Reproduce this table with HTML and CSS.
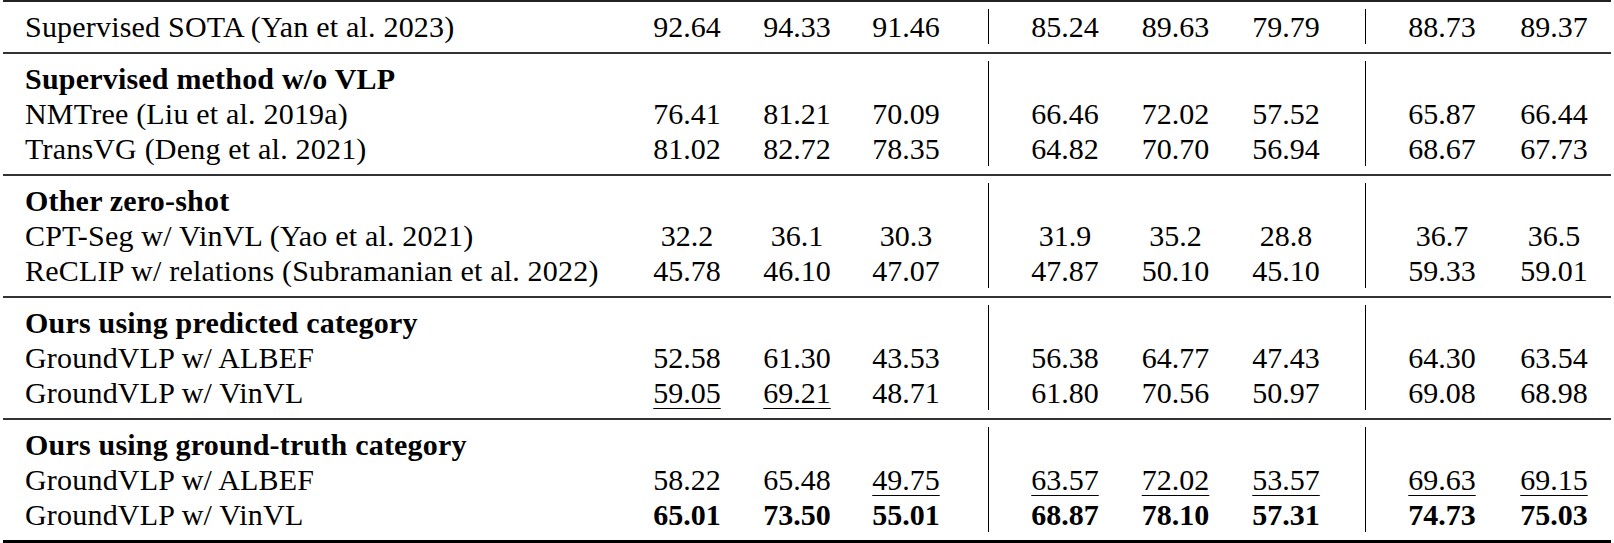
FILE: index.html
```html
<!DOCTYPE html>
<html lang="en">
<head>
    <meta charset="UTF-8">
    <title>Results table</title>
    <link rel="stylesheet" href="styles.css">
</head>
<body>
    <div class="results">
        <div class="block top">
            <div class="row">
                <div class="label">Supervised SOTA (Yan et al. 2023)</div>
                <div>92.64</div><div>94.33</div><div>91.46</div>
                <div class="sep a"></div>
                <div>85.24</div><div>89.63</div><div>79.79</div>
                <div class="sep b"></div>
                <div>88.73</div><div>89.37</div>
            </div>
        </div>

        <div class="block">
            <div class="row">
                <div class="label head">Supervised method w/o VLP</div>
                <div class="sep a"></div>
                <div class="sep b"></div>
            </div>
            <div class="row">
                <div class="label">NMTree (Liu et al. 2019a)</div>
                <div>76.41</div><div>81.21</div><div>70.09</div>
                <div class="sep a"></div>
                <div>66.46</div><div>72.02</div><div>57.52</div>
                <div class="sep b"></div>
                <div>65.87</div><div>66.44</div>
            </div>
            <div class="row">
                <div class="label">TransVG (Deng et al. 2021)</div>
                <div>81.02</div><div>82.72</div><div>78.35</div>
                <div class="sep a"></div>
                <div>64.82</div><div>70.70</div><div>56.94</div>
                <div class="sep b"></div>
                <div>68.67</div><div>67.73</div>
            </div>
        </div>

        <div class="block">
            <div class="row">
                <div class="label head">Other zero-shot</div>
                <div class="sep a"></div>
                <div class="sep b"></div>
            </div>
            <div class="row">
                <div class="label">CPT-Seg w/ VinVL (Yao et al. 2021)</div>
                <div>32.2</div><div>36.1</div><div>30.3</div>
                <div class="sep a"></div>
                <div>31.9</div><div>35.2</div><div>28.8</div>
                <div class="sep b"></div>
                <div>36.7</div><div>36.5</div>
            </div>
            <div class="row">
                <div class="label">ReCLIP w/ relations (Subramanian et al. 2022)</div>
                <div>45.78</div><div>46.10</div><div>47.07</div>
                <div class="sep a"></div>
                <div>47.87</div><div>50.10</div><div>45.10</div>
                <div class="sep b"></div>
                <div>59.33</div><div>59.01</div>
            </div>
        </div>

        <div class="block">
            <div class="row">
                <div class="label head">Ours using predicted category</div>
                <div class="sep a"></div>
                <div class="sep b"></div>
            </div>
            <div class="row">
                <div class="label">GroundVLP w/ ALBEF</div>
                <div>52.58</div><div>61.30</div><div>43.53</div>
                <div class="sep a"></div>
                <div>56.38</div><div>64.77</div><div>47.43</div>
                <div class="sep b"></div>
                <div>64.30</div><div>63.54</div>
            </div>
            <div class="row">
                <div class="label">GroundVLP w/ VinVL</div>
                <div><u>59.05</u></div><div><u>69.21</u></div><div>48.71</div>
                <div class="sep a"></div>
                <div>61.80</div><div>70.56</div><div>50.97</div>
                <div class="sep b"></div>
                <div>69.08</div><div>68.98</div>
            </div>
        </div>

        <div class="block bottom">
            <div class="row">
                <div class="label head">Ours using ground-truth category</div>
                <div class="sep a"></div>
                <div class="sep b"></div>
            </div>
            <div class="row">
                <div class="label">GroundVLP w/ ALBEF</div>
                <div>58.22</div><div>65.48</div><div><u>49.75</u></div>
                <div class="sep a"></div>
                <div><u>63.57</u></div><div><u>72.02</u></div><div><u>53.57</u></div>
                <div class="sep b"></div>
                <div><u>69.63</u></div><div><u>69.15</u></div>
            </div>
            <div class="row best">
                <div class="label">GroundVLP w/ VinVL</div>
                <div>65.01</div><div>73.50</div><div>55.01</div>
                <div class="sep a"></div>
                <div>68.87</div><div>78.10</div><div>57.31</div>
                <div class="sep b"></div>
                <div>74.73</div><div>75.03</div>
            </div>
        </div>
    </div>
</body>
</html>
```

FILE: styles.css
```css
body {
    margin: 0;
    background: #fff;
    color: #000;
    font-family: "Liberation Serif", "Times New Roman", serif;
    font-size: 30px;
}
.results {
    width: 1608px;
    margin-left: 3px;
}
.block {
    padding: 7px 0 8px;
    border-bottom: 2px solid #333;
}
.block.top {
    border-top: 2px solid #222;
}
.block.bottom {
    border-bottom: 3px solid #000;
}
.row {
    display: grid;
    grid-template-columns: 629px 110px 110px 108px 50px 110px 111px 110px 46px 110px 114px;
    height: 35px;
    line-height: 35px;
    text-align: center;
    white-space: nowrap;
}
.label {
    text-align: left;
    padding-left: 22px;
    letter-spacing: 0.2px;
}
.head {
    font-weight: bold;
}
.sep {
    border-left: 1px solid #000;
}
.sep.a {
    grid-column: 5;
    margin-left: 28px;
}
.sep.b {
    grid-column: 9;
    margin-left: 24px;
}
.best div {
    font-weight: bold;
}
.best .label {
    font-weight: normal;
}
u {
    text-decoration-thickness: 1px;
    text-underline-offset: 5px;
}
```
